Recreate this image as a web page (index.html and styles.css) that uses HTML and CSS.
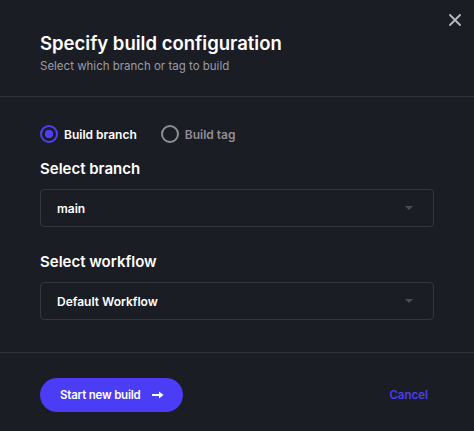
FILE: index.html
```html
<!DOCTYPE html>
<html lang="en">
<head>
    <meta charset="UTF-8">
    <title>Specify build configuration</title>
    <link rel="stylesheet" href="styles.css">
</head>
<body>
<div class="modal">
    <button class="close" aria-label="Close">
        <svg width="12" height="12" viewBox="0 0 12 12"><path d="M1 1L11 11M11 1L1 11" stroke="#b9bbc2" stroke-width="1.8" stroke-linecap="round"/></svg>
    </button>
    <div class="modal-header">
        <h1 class="title">Specify build configuration</h1>
        <p class="subtitle">Select which branch or tag to build</p>
    </div>
    <div class="modal-body">
        <div class="radios">
            <label class="radio checked"><span class="dot"></span>Build branch</label>
            <label class="radio"><span class="dot"></span>Build tag</label>
        </div>
        <div class="field">
            <div class="label">Select branch</div>
            <div class="select">main<span class="caret"></span></div>
        </div>
        <div class="field">
            <div class="label">Select workflow</div>
            <div class="select">Default Workflow<span class="caret"></span></div>
        </div>
    </div>
    <div class="modal-footer">
        <button class="primary"><span>Start new build</span>
            <svg width="12" height="8" viewBox="0 0 12 8"><path d="M0 4H9" stroke="#fff" stroke-width="2"/><path d="M7 0.5L11.5 4L7 7.5Z" fill="#fff"/></svg>
        </button>
        <a class="cancel" href="#">Cancel</a>
    </div>
</div>
</body>
</html>
```

FILE: styles.css
```css
body {
    margin: 0;
    background-color: #1b1d24;
    font-family: Inter, "Noto Sans", sans-serif;
    color: #ffffff;
}
.modal {
    position: relative;
    width: 474px;
    height: 431px;
}
.close {
    position: absolute;
    top: 14px;
    right: 13px;
    background: none;
    border: 0;
    padding: 0;
    width: 12px;
    height: 12px;
}
.modal-header {
    padding: 31px 40px 0;
    height: 65px;
    border-bottom: 1px solid #30333b;
}
.title {
    margin: 0;
    font-size: 18.5px;
    font-weight: 600;
    line-height: 24px;
}
.subtitle {
    margin: 4px 0 0;
    font-size: 11.5px;
    color: #9a9ca3;
}
.modal-body {
    padding: 27px 40px 0;
    height: 228px;
    border-bottom: 1px solid #30333b;
}
.radios {
    display: flex;
    gap: 24px;
    height: 20px;
    align-items: center;
}
.radio {
    display: flex;
    align-items: center;
    gap: 6px;
    font-size: 12px;
    font-weight: 600;
    color: #8d8f96;
}
.radio.checked {
    color: #ffffff;
}
.dot {
    width: 14px;
    height: 14px;
    border-radius: 50%;
    border: 2px solid #8d8f96;
}
.radio.checked .dot {
    border-color: #4f3ef5;
    background: radial-gradient(circle, #4f3ef5 0 4px, #1b1d24 4.5px);
}
.field {
    margin-top: 15px;
}
.field + .field {
    margin-top: 25px;
}
.label {
    font-size: 15px;
    font-weight: 600;
    line-height: 20px;
    margin-bottom: 10px;
}
.select {
    display: flex;
    align-items: center;
    justify-content: space-between;
    height: 36px;
    padding: 0 20px 0 16px;
    border: 1px solid #33363e;
    border-radius: 4px;
    font-size: 12px;
    font-weight: 600;
}
.caret {
    width: 0;
    height: 0;
    border-left: 4px solid transparent;
    border-right: 4px solid transparent;
    border-top: 4px solid #4a4d55;
}
.modal-footer {
    display: flex;
    align-items: center;
    justify-content: space-between;
    padding: 25px 46px 0 40px;
}
.primary {
    display: flex;
    align-items: center;
    justify-content: space-between;
    height: 34px;
    padding: 0 19px 0 20px;
    width: 143px;
    border: 0;
    border-radius: 17px;
    background-color: #4b3cf5;
    color: #ffffff;
    font-family: inherit;
    font-size: 11.5px;
    font-weight: 600;
    letter-spacing: -0.2px;
    white-space: nowrap;
}
.cancel {
    color: #4b3cf5;
    font-size: 11.5px;
    font-weight: 600;
    text-decoration: none;
}
```
